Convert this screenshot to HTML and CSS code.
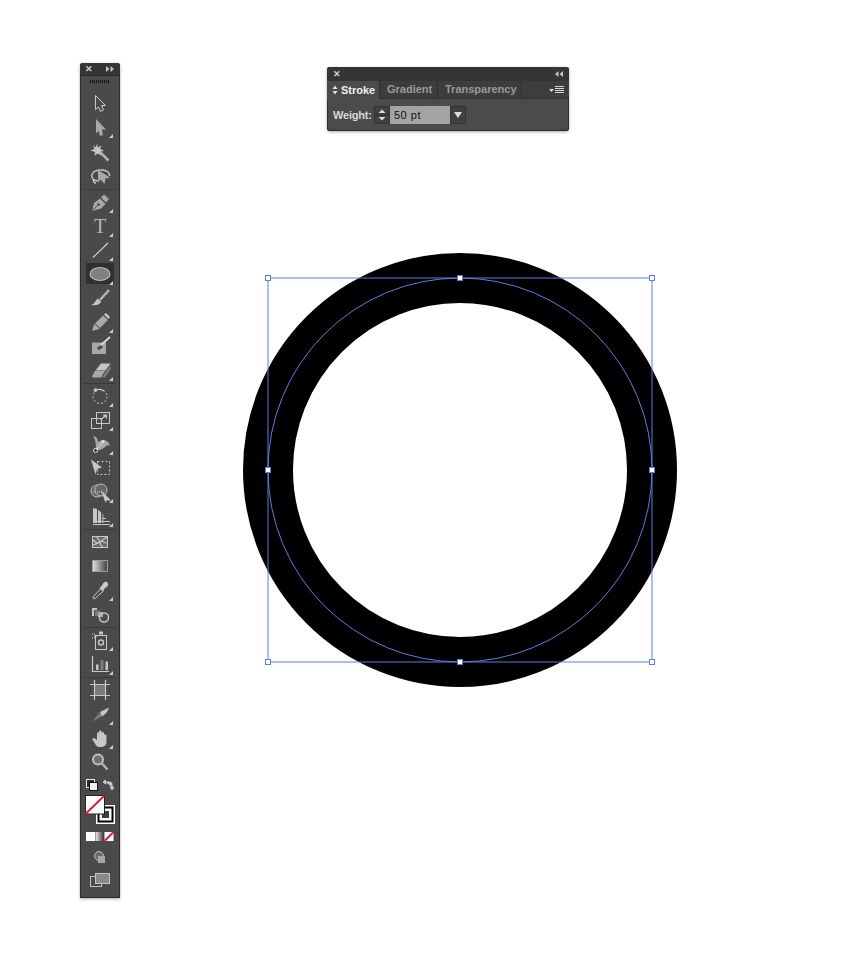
FILE: index.html
```html
<!DOCTYPE html>
<html lang="en">
<head>
    <meta charset="UTF-8">
    <title>Stroke weight</title>
    <link rel="stylesheet" href="styles.css">
</head>
<body>
    <!-- artwork -->
    <svg class="artwork" width="850" height="962" viewBox="0 0 850 962">
        <circle class="ring" cx="460" cy="470" r="192"/>
        <circle class="path" cx="460" cy="470" r="192"/>
        <rect class="bbox" x="268" y="278" width="384" height="384"/>
        <rect class="corner" x="265.500" y="275.500" width="5" height="5"/>
        <rect class="corner" x="649.500" y="275.500" width="5" height="5"/>
        <rect class="corner" x="265.500" y="659.500" width="5" height="5"/>
        <rect class="corner" x="649.500" y="659.500" width="5" height="5"/>
        <rect class="anchor" x="457.500" y="275.500" width="5" height="5"/>
        <rect class="anchor" x="265.500" y="467.500" width="5" height="5"/>
        <rect class="anchor" x="649.500" y="467.500" width="5" height="5"/>
        <rect class="anchor" x="457.500" y="659.500" width="5" height="5"/>
    </svg>

    <!-- tools panel -->
    <div class="toolbar">
        <div class="toolbar-head">
            <span class="close-x">&#x2715;</span>
            <svg class="head-arrows" width="8" height="8" viewBox="0 0 8 8"><path d="M0 1l3.500 3L0 7zM4.500 1L8 4 4.500 7z"/></svg>
        </div>
        <div class="grip"></div>

        <div class="tool">
            <svg class="ico" viewBox="0 0 28 24"><path d="M9.500 4.500L19.500 14.500H15.500L17.500 19L14.500 20.500L12.500 16L9.500 18.500Z"/></svg>
        </div>
        <div class="tool more">
            <svg class="ico" viewBox="0 0 28 24"><path class="f" d="M10 4L20 14.500H16L17 20L14 21L12.500 16L10 18.500Z"/></svg>
        </div>
        <div class="tool">
            <svg class="ico" viewBox="0 0 28 24"><path class="w" d="M11 4.500L12 8.500L15.500 6.500L14 10L18 11.500L14 13L15 16.500L11.500 14.500L8.500 17L9 13L4.500 11.500L8.500 10L7 6.500L10 8.500Z"/><path class="thick" d="M14 13L22.500 21.500"/></svg>
        </div>
        <div class="tool">
            <svg class="ico" viewBox="0 0 28 24"><path class="lasso" d="M13 18C7 18 5 15 6 11.500C7 8 12 6.500 17 7C21 7.500 24 10 23.500 13"/><path class="f" d="M12 7L24 14.500L19.500 15.500L18.500 21L15 17L12 18Z"/><path class="lasso" d="M8 16C6.500 18 8 20 10 20"/></svg>
        </div>
        <div class="sep sep-first"></div>

        <div class="tool more">
            <svg class="ico" viewBox="0 0 28 24"><path class="f" d="M6 21L8 13L14 8.500L19.500 14L15 18.500ZM15 7.500L18 4.500L23 9L20 12.500Z"/><path class="cut" d="M6.500 20.500L12 15"/><circle class="cut-dot" cx="12.500" cy="14.500" r="1.300"/></svg>
        </div>
        <div class="tool more">
            <span class="type-t">T</span>
        </div>
        <div class="tool more">
            <svg class="ico" viewBox="0 0 28 24"><path class="line-ico" d="M7 19.500L22 5"/></svg>
        </div>
        <div class="tool more active">
            <svg class="ico" viewBox="0 0 28 24"><ellipse class="oval" cx="14" cy="12" rx="10" ry="6.500"/></svg>
        </div>
        <div class="tool">
            <svg class="ico" viewBox="0 0 28 24"><path class="thick" d="M23 4L14 14"/><path class="w" d="M11.500 12.500L15 15.500C14.500 18 11 20 5 19C8 18.500 9.500 15 11.500 12.500Z"/></svg>
        </div>
        <div class="tool more">
            <svg class="ico" viewBox="0 0 28 24"><path class="f" d="M6 21L8 14.500L17 5.500L22 10L13 19Z"/><path class="w" d="M18 4.500L20 3L24 7L22.500 9Z"/><path class="cut" d="M9 14L14.500 18.500"/></svg>
        </div>
        <div class="tool">
            <svg class="ico" viewBox="0 0 28 24"><path class="f" d="M6 8.500H20V20H6Z"/><path class="thick-w" d="M24 3L15 11"/><path class="dark-w" d="M11 15C12 11.500 15 10.500 17 12.500C16 15.500 13 16.500 11 15Z"/></svg>
        </div>
        <div class="tool more">
            <svg class="ico" viewBox="0 0 28 24"><path class="f" d="M6 18.500L9 13H19L15 19.500L7 19.500Z"/><path class="w" d="M9.500 12.500L15 5.500H24.500L19.500 12.500Z"/><path class="t" d="M16 19.500L20 13.500L24.500 7V11.500L19 19.500Z"/></svg>
        </div>
        <div class="sep"></div>

        <div class="tool more">
            <svg class="ico" viewBox="0 0 28 24"><circle class="dash" cx="14" cy="12.500" r="7"/><path class="solid" d="M8.500 7.500C10.500 5 15 4.500 18 7"/><path class="w" d="M10.500 3.500V8.500L7 6Z"/></svg>
        </div>
        <div class="tool more">
            <svg class="ico" viewBox="0 0 28 24"><rect x="5.500" y="10.500" width="10" height="10"/><rect x="10.500" y="4.500" width="13" height="11"/><path class="solid" d="M14.500 12L20 7"/><path class="w" d="M16.500 6.500H21V11Z"/></svg>
        </div>
        <div class="tool more">
            <svg class="ico" viewBox="0 0 28 24"><path class="f" d="M7 4C10 4 12 7 12 10C14 9 15 8 17 8C20 8 23 10 24 14C23 13 21 13 20 14C19 15 17 17 14 18H10C10 14 10 8 7 4Z"/><path class="node-line" d="M10 18L17 10"/><circle class="node" cx="9.500" cy="18.500" r="2"/><circle class="node-small" cx="17" cy="9.500" r="1.500"/></svg>
        </div>
        <div class="tool">
            <svg class="ico" viewBox="0 0 28 24"><rect class="dash" x="11.500" y="5.500" width="12" height="13"/><path class="w" d="M5 3.500L16 11.500L11 13L9.500 18.500Z"/></svg>
        </div>
        <div class="tool more">
            <svg class="ico" viewBox="0 0 28 24"><ellipse class="blob" cx="11" cy="11" rx="6" ry="6"/><ellipse class="blob" cx="15" cy="10" rx="6" ry="6"/><path class="dot-line" d="M7 12H16"/><path class="w" d="M15 10L25 20.500L20.500 20.500L19.500 23Z"/></svg>
        </div>
        <div class="tool more">
            <svg class="ico" viewBox="0 0 28 24"><path class="w" d="M7 4L11 5V19H7Z"/><path class="w" d="M12 6L15 8V19H12Z"/><path class="t" d="M15.500 9L18 11V19H15.500Z"/><path class="solid" d="M7 20.500H24M11 17.500H24M16 14.500H20"/></svg>
        </div>
        <div class="sep"></div>

        <div class="tool">
            <svg class="ico" viewBox="0 0 28 24"><rect class="mesh" x="6.500" y="6.500" width="15" height="11"/><path class="solid" d="M7 10C10 13 12 14 14 12C16 10 18 9 21 7M11 7C12 9 13 10 14 12C14 14 15 16 17 17M7 15C9 14 11 14 14 12M15 11C17 12 19 13 21 13"/></svg>
        </div>
        <div class="tool">
            <svg class="ico" viewBox="0 0 28 24"><defs><linearGradient id="gradTool" x1="0" x2="1" y1="0" y2="0"><stop offset="0" stop-color="#e4e4e4"/><stop offset="1" stop-color="#3e3e3e"/></linearGradient></defs><rect class="grad" x="6.500" y="6.500" width="15" height="11"/></svg>
        </div>
        <div class="tool more">
            <svg class="ico" viewBox="0 0 28 24"><path d="M7.500 20.500L7 19L15 10.500L17.500 13L9 20.500Z"/><path class="w" d="M13.500 10L16 7.500C17 4 20 3 21.500 4.500C23 6 22 9 19 10L16.500 13.500Z"/></svg>
        </div>
        <div class="tool">
            <svg class="ico" viewBox="0 0 28 24"><path class="w" d="M6 6H11V8H8V14H6Z"/><path class="t" d="M9 8.500H14V14H9Z"/><path class="f" d="M12 10H17V15H12Z"/><circle class="ring-ico" cx="18" cy="15.500" r="4.500"/></svg>
        </div>
        <div class="sep"></div>

        <div class="tool more">
            <svg class="ico" viewBox="0 0 28 24"><path class="dot-line" d="M6 6H10M8 8H11M6 10H9"/><rect class="w" x="13" y="3.500" width="4" height="3"/><rect x="9.500" y="7.500" width="11" height="14"/><circle class="ring-ico" cx="15" cy="14.500" r="2.500"/></svg>
        </div>
        <div class="tool more">
            <svg class="ico" viewBox="0 0 28 24"><path class="w" d="M10 12.500H12.500V18H10Z"/><path class="t" d="M14.500 8H17.500V18H14.500Z"/><path class="w" d="M19.500 9.500H22V18H19.500Z"/><path class="solid" d="M6.500 4V19.500H23"/></svg>
        </div>
        <div class="sep"></div>

        <div class="tool">
            <svg class="ico" viewBox="0 0 28 24"><rect class="art" x="8.500" y="6.500" width="11" height="11"/><path class="solid" d="M4 6.500H24M4 17.500H24M8.500 2V22M19.500 2V22"/></svg>
        </div>
        <div class="tool more">
            <svg class="ico" viewBox="0 0 28 24"><path class="w" d="M14 10L23 5.500C22 9 20 12 16 14.500Z"/><path class="t" d="M14 10L16 14.500L6 19.500Z"/></svg>
        </div>
        <div class="tool more">
            <svg class="ico" viewBox="0 0 28 24"><path class="w" d="M6 13L8 12L11 14V7.500C11 6 13 6 13 7.500V5.500C13 4 15.500 4 15.500 5.500V7C16 5.500 18 5.500 18 7.500V9C18.500 8 20.500 8 20.500 10V16C20.500 19 18 21 15 21H13C10 21 9 17 6 13Z"/></svg>
        </div>
        <div class="tool">
            <svg class="ico" viewBox="0 0 28 24"><circle class="lens" cx="12" cy="9.500" r="5"/><path class="thick" d="M16 13.500L21.500 19.500"/></svg>
        </div>

        <div class="colors">
            <div class="swap-row">
                <svg width="12" height="12" viewBox="0 0 12 12"><rect class="mini-back" x="0.500" y="0.500" width="8" height="8"/><rect class="mini-front" x="3.500" y="3.500" width="8" height="8"/></svg>
                <svg class="swap" width="12" height="12" viewBox="0 0 12 12"><path d="M3 3H8C9.500 3 10 4 10 5V8M1 3L3.500 1V5ZM10 11L8 8H12Z"/></svg>
            </div>
            <svg class="fill-stroke" width="30" height="30" viewBox="0 0 30 30">
                <rect class="stroke-w" x="11" y="10" width="19" height="19"/>
                <rect class="stroke-k" x="13.500" y="12.500" width="14" height="14"/>
                <rect class="stroke-w" x="15.500" y="14.500" width="10" height="10"/>
                <rect class="stroke-d" x="17" y="16" width="7" height="7"/>
                <rect class="fill-none" x="0.500" y="0.500" width="19" height="18.500"/>
                <path class="red" d="M0.500 19L19.500 0.500"/>
            </svg>
            <svg class="modes" width="28" height="10" viewBox="0 0 28 10">
                <defs><linearGradient id="gradMode" x1="0" x2="1" y1="0" y2="0"><stop offset="0" stop-color="#f0f0f0"/><stop offset="1" stop-color="#333"/></linearGradient></defs>
                <rect class="mode-w" width="9" height="9"/>
                <rect class="mode-g" x="9.500" width="8.500" height="9"/>
                <rect class="mode-w" x="18.500" width="9" height="9"/>
                <path class="red" d="M18.500 9L27.500 0"/>
            </svg>
            <svg class="draw-mode" width="14" height="14" viewBox="0 0 14 14"><circle class="dm-a" cx="6" cy="6" r="4.500"/><rect class="dm-b" x="5" y="6" width="7" height="7"/></svg>
            <svg class="screen-mode" width="20" height="14" viewBox="0 0 20 14"><rect class="dm-c" x="0.500" y="3.500" width="11" height="10"/><rect class="dm-d" x="5.500" y="0.500" width="14" height="10"/></svg>
        </div>
    </div>

    <!-- stroke panel -->
    <div class="stroke-panel">
        <div class="panel-head">
            <span class="close-x">&#x2715;</span>
            <svg class="head-arrows" width="8" height="8" viewBox="0 0 8 8"><path d="M3.500 1L0 4l3.500 3zM8 1L4.500 4 8 7z"/></svg>
        </div>
        <div class="tabs">
            <div class="tab tab-active">
                <svg width="6" height="10" viewBox="0 0 6 10"><path d="M3 .5L5.500 4H.5zM3 9.500L5.500 6H.5z"/></svg>
                Stroke
            </div>
            <div class="tab tab-gradient">Gradient</div>
            <div class="tab tab-transparency">Transparency</div>
            <div class="tab-rest">
                <svg width="15" height="8" viewBox="0 0 15 8"><path class="menu-tri" d="M0 3h5L2.500 6z"/><path class="menu-lines" d="M6 .5h9M6 2.500h9M6 4.500h9M6 6.500h9"/></svg>
            </div>
        </div>
        <div class="panel-body">
            <span class="weight-label">Weight:</span>
            <div class="stepper">
                <svg width="16" height="18" viewBox="0 0 16 18"><path class="step-tri" d="M8 3.500l3.500 3.500h-7zM8 14.500L11.500 11h-7z"/><path class="step-line" d="M0 9h16"/></svg>
            </div>
            <div class="weight-value">50 pt</div>
            <div class="weight-drop">
                <svg width="8" height="6" viewBox="0 0 8 6"><path d="M0 0h8L4 6z"/></svg>
            </div>
        </div>
    </div>
</body>
</html>
```

FILE: styles.css
```css
body {
    margin: 0;
    height: 962px;
    background-color: #fff;
    font-family: "Liberation Sans", Arial, sans-serif;
    overflow: hidden;
}

/* artwork */
.artwork {
    position: absolute;
    left: 0;
    top: 0;
}

.ring {
    fill: none;
    stroke: #000;
    stroke-width: 50;
}

.path,
.bbox {
    fill: none;
    stroke: #5b7fdc;
    stroke-width: 1;
}

.corner {
    fill: #fff;
    stroke: #5b7fdc;
    stroke-width: 1;
}

.anchor {
    fill: #fff;
    stroke: #5b7fdc;
    stroke-width: 1;
}

/* tools panel */
.toolbar {
    position: absolute;
    left: 80px;
    top: 63px;
    width: 40px;
    height: 835px;
    box-sizing: border-box;
    background-color: #4a4a4a;
    border-radius: 3px 3px 0 0;
    box-shadow: 0 0 0 1px #2c2c2c inset, 0 1px 3px rgba(0, 0, 0, 0.35);
    display: flex;
    flex-direction: column;
    align-items: center;
}

.toolbar-head {
    width: 100%;
    height: 13px;
    box-sizing: border-box;
    flex: none;
    padding: 0 6px 0 5px;
    background-color: #353535;
    border-radius: 3px 3px 0 0;
    border-bottom: 1px solid #2a2a2a;
    display: flex;
    align-items: center;
    justify-content: space-between;
}

.close-x {
    font-size: 9px;
    line-height: 10px;
    font-weight: bold;
    color: #d0d0d0;
}

.head-arrows {
    fill: #c4c4c4;
}

.grip {
    width: 20px;
    height: 3px;
    flex: none;
    margin: 4px 0 8px;
    background: repeating-linear-gradient(90deg, #151515 0, #151515 1px, #4a4a4a 1px, #4a4a4a 2px);
}

.tool {
    width: 28px;
    height: 24px;
    flex: none;
    position: relative;
    display: flex;
    align-items: center;
    justify-content: center;
}

.tool.more::after {
    content: "";
    position: absolute;
    right: 1px;
    bottom: 1px;
    border-style: solid;
    border-width: 0 0 4px 4px;
    border-color: transparent transparent #d0d0d0 transparent;
}

.tool.active {
    background: linear-gradient(#2f2f2f, #2f2f2f) no-repeat 0 1px / 100% 21px;
}

.sep {
    width: 32px;
    height: 2px;
    flex: none;
    box-sizing: border-box;
    border-bottom: 1px solid #3a3a3a;
}

.sep-first {
    height: 3px;
}

.ico {
    width: 28px;
    height: 24px;
    flex: none;
    fill: none;
    stroke: #c8c8c8;
    stroke-width: 1;
}

.ico .f {
    fill: #a8a8a8;
    stroke: none;
}

.ico .w {
    fill: #c6c6c6;
    stroke: none;
}

.ico .t {
    fill: #7c7c7c;
    stroke: none;
}

.ico .thick {
    stroke: #b4b4b4;
    stroke-width: 2.5;
}

.ico .thick-w {
    stroke: #d8d8d8;
    stroke-width: 2;
}

.ico .dark-w {
    fill: #4a4a4a;
    stroke: none;
}

.ico .lasso {
    stroke: #c0c0c0;
    stroke-width: 1.5;
}

.ico .line-ico {
    stroke: #cfcfcf;
    stroke-width: 1.2;
}

.ico .cut {
    stroke: #4a4a4a;
    stroke-width: 1;
}

.ico .cut-dot {
    fill: #4a4a4a;
    stroke: none;
}

.ico .oval {
    fill: #808080;
    stroke: #b8b8b8;
    stroke-width: 1.2;
}

.ico .dash {
    stroke-dasharray: 2 2;
}

.ico .solid {
    stroke: #c8c8c8;
    stroke-width: 1.2;
}

.ico .node-line {
    stroke: #e0e0e0;
}

.ico .node {
    fill: #333;
    stroke: #e8e8e8;
}

.ico .node-small {
    fill: #e0e0e0;
    stroke: none;
}

.ico .dot-line {
    stroke: #e0e0e0;
    stroke-dasharray: 1 1;
}

.ico .blob {
    fill: #666;
    stroke: #bdbdbd;
}

.ico .mesh {
    fill: #6a6a6a;
    stroke: #c8c8c8;
}

.ico .grad {
    fill: url(#gradTool);
    stroke: #9a9a9a;
}

.ico .ring-ico {
    stroke: #c4c4c4;
    stroke-width: 1.5;
}

.ico .art {
    fill: #7a7a7a;
    stroke: #b0b0b0;
}

.ico .lens {
    fill: #6f6f6f;
    stroke: #c0c0c0;
    stroke-width: 2;
}

.type-t {
    font-family: "Liberation Serif", "Times New Roman", serif;
    font-size: 20px;
    line-height: 24px;
    color: #b4b4b4;
}

/* fill and stroke area */
.colors {
    margin-top: 5px;
    width: 100%;
    display: flex;
    flex-direction: column;
    align-items: center;
}

.swap-row {
    width: 28px;
    height: 12px;
    display: flex;
    justify-content: space-between;
    align-items: center;
}

.mini-back {
    fill: #2a2a2a;
    stroke: #e8e8e8;
}

.mini-front {
    fill: #f0f0f0;
    stroke: #111;
}

.swap {
    fill: #c8c8c8;
    stroke: #c8c8c8;
    stroke-width: 1;
}

.fill-stroke {
    margin-top: 4px;
    flex: none;
}

.stroke-w {
    fill: #fff;
}

.stroke-k {
    fill: none;
    stroke: #000;
    stroke-width: 2;
}

.stroke-d {
    fill: #3c3c3c;
}

.fill-none {
    fill: #fff;
    stroke: #222;
    stroke-width: 1;
}

.red {
    stroke: #d8202c;
    stroke-width: 2;
    fill: none;
}

.modes {
    margin-top: 7px;
    flex: none;
}

.mode-w {
    fill: #fff;
}

.mode-g {
    fill: url(#gradMode);
}

.draw-mode {
    margin-top: 8px;
    flex: none;
}

.dm-a {
    fill: #6c6c6c;
    stroke: #c0c0c0;
}

.dm-b {
    fill: #a6a6a6;
}

.screen-mode {
    margin-top: 9px;
    flex: none;
}

.dm-c {
    fill: none;
    stroke: #c4c4c4;
}

.dm-d {
    fill: #8a8a8a;
    stroke: #c4c4c4;
}

/* stroke panel */
.stroke-panel {
    position: absolute;
    left: 327px;
    top: 67px;
    width: 242px;
    height: 64px;
    background-color: #4b4b4b;
    border-radius: 3px;
    box-shadow: 0 0 0 1px #2e2e2e inset, 0 1px 3px rgba(0, 0, 0, 0.35);
    overflow: hidden;
}

.panel-head {
    height: 14px;
    padding: 0 6px;
    background-color: #353535;
    display: flex;
    align-items: center;
    justify-content: space-between;
}

.tabs {
    height: 17px;
    display: flex;
    background-color: #3d3d3d;
    border-bottom: 1px solid #2f2f2f;
}

.tab {
    box-sizing: border-box;
    padding-left: 7px;
    font-size: 11px;
    font-weight: bold;
    line-height: 17px;
    color: #9a9a9a;
    border-right: 1px solid #2f2f2f;
}

.tab-active {
    width: 53px;
    padding-left: 5px;
    height: 18px;
    display: flex;
    align-items: center;
    gap: 3px;
    color: #f0f0f0;
    background-color: #4b4b4b;
}

.tab-active svg {
    fill: #e0e0e0;
}

.tab-gradient {
    width: 58px;
}

.tab-transparency {
    width: 84px;
}

.tab-rest {
    flex: 1;
    display: flex;
    align-items: center;
    justify-content: flex-end;
    padding-right: 5px;
}

.menu-tri {
    fill: #d8d8d8;
}

.menu-lines {
    stroke: #d8d8d8;
    stroke-width: 1;
}

.panel-body {
    height: 32px;
    padding-left: 6px;
    display: flex;
    align-items: center;
}

.weight-label {
    width: 41px;
    font-size: 11px;
    font-weight: bold;
    letter-spacing: -0.2px;
    color: #d8d8d8;
}

.stepper {
    width: 16px;
    height: 18px;
    background-color: #404040;
    box-shadow: 0 0 0 1px #333 inset;
}

.stepper svg {
    display: block;
}

.step-tri {
    fill: #dcdcdc;
}

.step-line {
    stroke: #2e2e2e;
}

.weight-value {
    width: 56px;
    height: 18px;
    padding-left: 4px;
    background-color: #a4a4a4;
    font-size: 11px;
    line-height: 18px;
    letter-spacing: 0.5px;
    color: #111;
}

.weight-drop {
    width: 16px;
    height: 18px;
    background-color: #404040;
    box-shadow: 0 0 0 1px #333 inset;
    display: flex;
    align-items: center;
    justify-content: center;
    fill: #dcdcdc;
}
```
